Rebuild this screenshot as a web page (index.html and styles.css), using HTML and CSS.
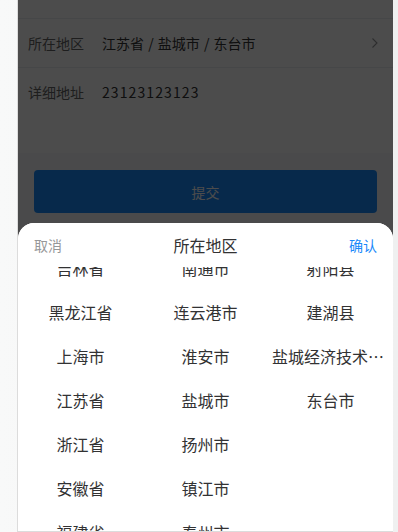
FILE: index.html
```html
<!DOCTYPE html>
<html lang="zh-CN">
<head>
<meta charset="utf-8">
<title>所在地区</title>
<link rel="stylesheet" href="styles.css">
</head>
<body>
<div class="phone">
  <div class="form">
    <div class="cell cell-top"></div>
    <div class="cell cell-region">
      <span class="label">所在地区</span>
      <span class="value">江苏省 / 盐城市 / 东台市</span>
      <svg class="arrow" viewBox="0 0 16 16" width="16" height="16"><path d="M5.5 3.5 L10 8 L5.5 12.5" fill="none" stroke="#969799" stroke-width="1.1"/></svg>
    </div>
    <div class="cell cell-detail">
      <span class="label">详细地址</span>
      <span class="value digits">23123123123</span>
    </div>
  </div>
  <div class="actions">
    <button class="submit">提交</button>
  </div>

  <div class="mask"></div>

  <div class="popup">
    <div class="toolbar">
      <span class="cancel">取消</span>
      <span class="title">所在地区</span>
      <span class="confirm">确认</span>
    </div>
    <div class="columns">
      <div class="column">
        <div class="item">吉林省</div>
        <div class="item">黑龙江省</div>
        <div class="item">上海市</div>
        <div class="item">江苏省</div>
        <div class="item">浙江省</div>
        <div class="item">安徽省</div>
        <div class="item">福建省</div>
      </div>
      <div class="column">
        <div class="item">南通市</div>
        <div class="item">连云港市</div>
        <div class="item">淮安市</div>
        <div class="item">盐城市</div>
        <div class="item">扬州市</div>
        <div class="item">镇江市</div>
        <div class="item">泰州市</div>
      </div>
      <div class="column">
        <div class="item">射阳县</div>
        <div class="item">建湖县</div>
        <div class="item">盐城经济技术开发区</div>
        <div class="item">东台市</div>
      </div>
    </div>
  </div>
</div>
</body>
</html>
```

FILE: styles.css
```css
html, body {
  margin: 0;
  padding: 0;
}
body {
  width: 398px;
  height: 532px;
  overflow: hidden;
  background: linear-gradient(to right, #f8f9f9, #eff0f0);
  font-family: "Noto Sans CJK SC", "Noto Sans", sans-serif;
}
.phone {
  position: relative;
  margin-left: 17px;
  width: 375px;
  height: 531px;
  border-left: 1px solid #dcdcdc;
  border-bottom: 1px solid #dcdcdc;
  background: #f7f8fa;
  overflow: hidden;
}
.form {
  background: #fff;
}
.cell {
  display: flex;
  align-items: center;
  padding: 0 10px;
  box-sizing: border-box;
  border-bottom: 1px solid #ebedf0;
  font-size: 14px;
}
.cell-top {
  height: 19px;
}
.cell-region {
  height: 49px;
}
.cell-detail {
  height: 85px;
  align-items: flex-start;
  padding-top: 14px;
  border-bottom: none;
}
.label {
  width: 74px;
  flex: none;
  color: #646566;
  line-height: 20px;
}
.value {
  flex: 1;
  color: #323233;
  line-height: 20px;
  word-spacing: 1px;
}
.digits {
  letter-spacing: 1.1px;
}
.arrow {
  flex: none;
}
.actions {
  padding: 17px 16px 0;
}
.submit {
  display: block;
  width: 100%;
  height: 43px;
  border: none;
  border-radius: 4px;
  background: #1989fa;
  color: #fff;
  font-family: inherit;
  font-size: 14px;
}
.mask {
  position: absolute;
  inset: 0;
  background: rgba(0, 0, 0, 0.7);
}
.popup {
  position: absolute;
  left: 0;
  right: 0;
  top: 223px;
  bottom: 0;
  background: #fff;
  border-radius: 16px 16px 0 0;
  overflow: hidden;
}
.toolbar {
  position: relative;
  z-index: 1;
  height: 44px;
  display: flex;
  align-items: center;
  justify-content: space-between;
  padding: 0 16px;
  background: #fff;
}
.cancel {
  font-size: 14px;
  color: #969799;
}
.confirm {
  font-size: 14px;
  color: #1989fa;
}
.title {
  font-size: 16px;
  color: #323233;
}
.columns {
  display: flex;
}
.column {
  flex: 1;
  min-width: 0;
  margin-top: -21px;
}
.item {
  height: 44px;
  line-height: 44px;
  padding: 0 4px;
  text-align: center;
  font-size: 16px;
  color: #323233;
  white-space: nowrap;
  overflow: hidden;
  text-overflow: ellipsis;
}
```
